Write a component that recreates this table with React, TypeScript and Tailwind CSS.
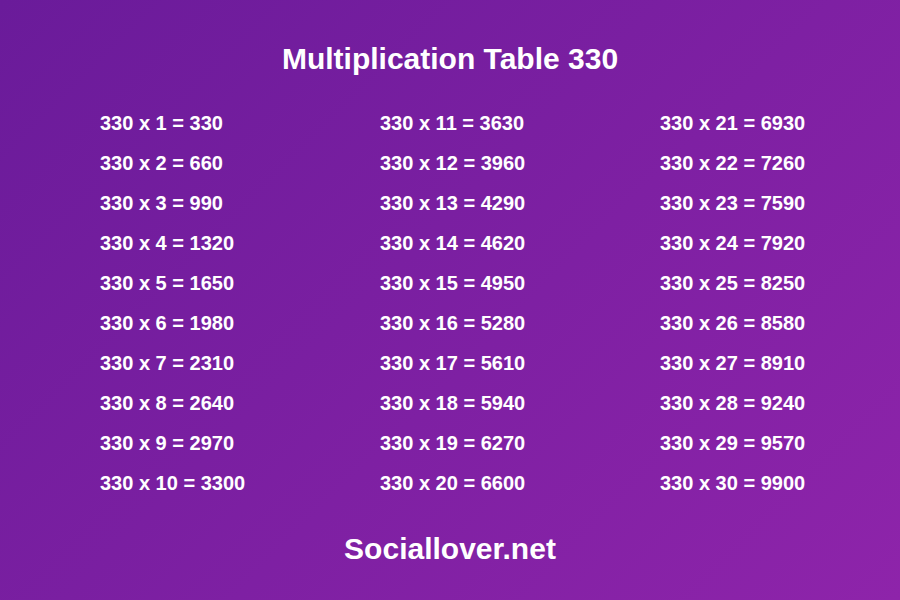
const rows = Array.from({ length: 10 }, (_, i) => i + 1);
const cols = [0, 10, 20];

export default function App() {
  return (
    <div
      className="w-[900px] h-[600px] overflow-hidden bg-[linear-gradient(135deg,#6a1b9a,#8e24aa)] text-white font-bold pt-[41px]"
      style={{ fontFamily: '"Liberation Sans", Arial, sans-serif' }}
    >
      <h1 className="text-center text-[30px] leading-[36px]">Multiplication Table 330</h1>

      <div className="mt-[26px] pl-[100px] grid grid-cols-[280px_280px_240px]">
        {cols.map((offset) => (
          <div key={offset} className="flex flex-col">
            {rows.map((r) => {
              const n = r + offset;
              return (
                <div key={n} className="text-[20px] leading-[40px] whitespace-nowrap">
                  330 x {n} = {330 * n}
                </div>
              );
            })}
          </div>
        ))}
      </div>

      <div className="mt-[28px] text-center text-[30px] leading-[36px]">Sociallover.net</div>
    </div>
  );
}
